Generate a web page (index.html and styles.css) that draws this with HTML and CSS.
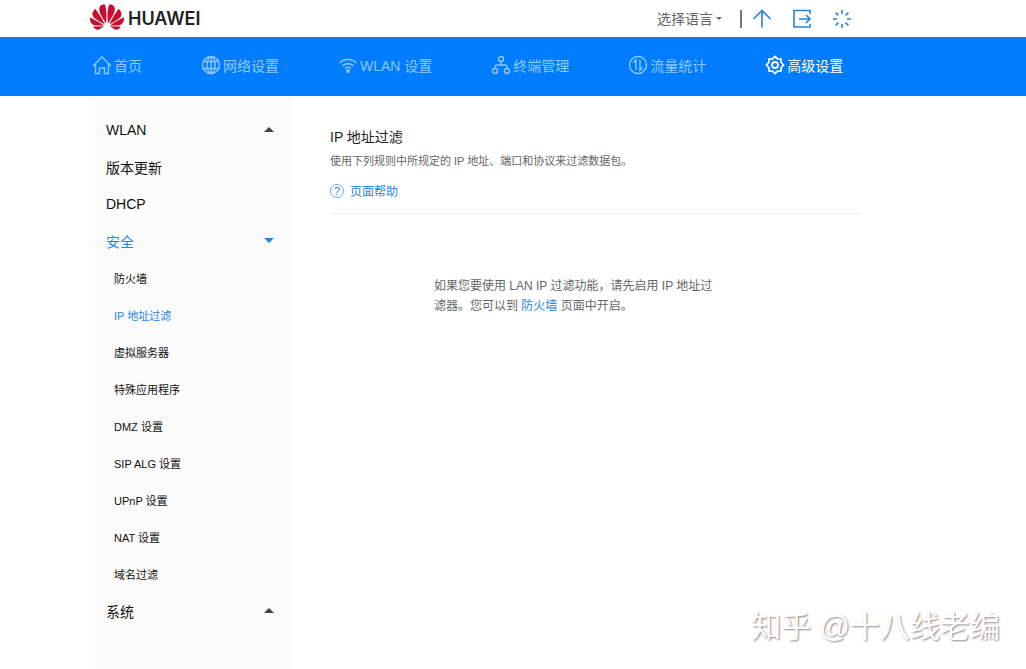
FILE: index.html
```
<!DOCTYPE html>
<html lang="zh-CN">
<head>
<meta charset="UTF-8">
<meta name="viewport" content="width=device-width, initial-scale=1.0">
<title>IP 地址过滤</title>
<link rel="stylesheet" href="styles.css">
</head>
<body>
<header class="topbar">
  <a class="logo" href="#">
    <svg class="logo-mark" viewBox="0 3 24 18" aria-hidden="true"><path d="M3.67 6.14S1.82 7.91 1.72 9.78v.35c.08 1.51 1.22 2.4 1.22 2.4 1.83 1.79 6.26 4.04 7.3 4.55 0 0 .06.03.1-.01l.02-.04v-.04C7.52 10.8 3.67 6.14 3.67 6.14zM9.65 18.6c-.02-.08-.1-.08-.1-.08l-7.38.26c.8 1.43 2.15 2.53 3.56 2.2.96-.25 3.16-1.78 3.88-2.3.06-.05.04-.09.04-.09zm.08-.78C6.49 15.63.21 12.28.21 12.28c-.15.46-.2.9-.21 1.3v.07c0 1.07.4 1.82.4 1.82.8 1.69 2.34 2.2 2.34 2.2.7.3 1.4.31 1.4.31.12.02 4.4 0 5.54 0 .05 0 .08-.05.08-.05v-.06c0-.03-.03-.05-.03-.05zM9.06 3.19a3.42 3.42 0 0 0-2.57 3.15v.41c.03.6.16 1.05.16 1.05.66 2.9 3.86 7.65 4.55 8.65.05.05.1.03.1.03a.1.1 0 0 0 .06-.1c1.06-10.6-1.11-13.42-1.11-13.42-.32.02-1.19.23-1.19.23zm8.299 2.27s-.49-1.8-2.44-2.28c0 0-.57-.14-1.17-.22 0 0-2.18 2.81-1.12 13.43.01.07.06.08.06.08.07.03.1-.03.1-.03.72-1.03 3.9-5.76 4.55-8.64 0 0 .36-1.4.02-2.34zm-2.92 13.07s-.07 0-.09.05c0 0-.01.07.03.1.7.51 2.85 2 3.88 2.3 0 0 .16.05.43.06h.14c.69-.02 1.9-.37 3-2.26l-7.4-.25zm7.83-8.41c.14-2.06-1.94-3.97-1.94-3.98 0 0-3.85 4.66-6.67 10.8 0 0-.03.08.02.13l.04.01h.06c1.06-.53 5.46-2.77 7.28-4.54 0 0 1.15-.93 1.21-2.42zm1.52 2.14s-6.28 3.37-9.52 5.55c0 0-.05.04-.03.11 0 0 .03.06.07.06 1.16 0 5.56 0 5.67-.02 0 0 .57-.02 1.27-.29 0 0 1.56-.5 2.37-2.27 0 0 .73-1.45.17-3.14z"/></svg>
    <span>HUAWEI</span>
  </a>
  <div class="tools">
    <div class="language">
      <select aria-label="选择语言">
        <option>选择语言</option>
      </select>
      <span class="caret"></span>
    </div>
    <span class="divider"></span>
    <button type="button" aria-label="更新">
      <svg viewBox="0 0 20 20"><path d="M10 18.500V2M1.500 10 10 1.500 18.500 10"/></svg>
    </button>
    <button type="button" aria-label="退出">
      <svg viewBox="0 0 20 20"><path d="M18 5V1.500H2v16.500h16V15M7 10h11M14 6l4 4-4 4"/></svg>
    </button>
    <button type="button" aria-label="状态">
      <svg viewBox="0 0 20 20"><path d="M10 1v4M10 15v4M1 10h4M15 10h4M3.600 3.600l2.800 2.800M13.600 13.600l2.800 2.800M3.600 16.400l2.800-2.800M13.600 6.400l2.800-2.800"/></svg>
    </button>
  </div>
</header>

<nav class="mainnav">
  <a href="#"><svg viewBox="0 0 20 20"><path d="M1 11 10 2l9 9M3.500 9v9.500h4V13h5v5.500h4V9"/></svg>首页</a>
  <a href="#"><svg viewBox="0 0 20 20"><circle cx="10" cy="10" r="8.500"/><ellipse cx="10" cy="10" rx="4" ry="8.500"/><path d="M10 1.500v17M2.500 6.500h15M2.500 13.500h15"/></svg>网络设置</a>
  <a href="#"><svg viewBox="0 0 20 20"><path d="M1.500 8c4.700-4.700 12.300-4.700 17 0M4.500 11c3-3 8-3 11 0M7 13.500c1.700-1.700 4.300-1.700 6 0"/><circle class="dot" cx="10" cy="16" r="1.200"/></svg>WLAN 设置</a>
  <a href="#"><svg viewBox="0 0 20 20"><circle cx="10" cy="4" r="2.500"/><circle cx="4" cy="16" r="2.500"/><circle cx="16" cy="16" r="2.500"/><path d="M10 6.500V10M4 13.500V12q0-2 2-2h8q2 0 2 2v1.500"/></svg>终端管理</a>
  <a href="#"><svg viewBox="0 0 20 20"><circle cx="10" cy="10" r="8.500"/><path d="M8 15V5L5.500 7.500M12 5v10l2.500-2.500"/></svg>流量统计</a>
  <a class="active" href="#"><svg viewBox="0 0 20 20"><path d="M10 1.500 12.500 3.800 16 4 16.200 7.500 18.500 10 16.200 12.500 16 16 12.500 16.200 10 18.500 7.500 16.200 4 16 3.800 12.500 1.500 10 3.800 7.500 4 4 7.500 3.800Z"/><circle cx="10" cy="10" r="3"/></svg>高级设置</a>
</nav>

<div class="page">
  <aside class="sidebar">
    <button type="button">WLAN<span class="caret up"></span></button>
    <a href="#">版本更新</a>
    <a href="#">DHCP</a>
    <button class="active" type="button" aria-expanded="true">安全<span class="caret"></span></button>
    <ul class="submenu">
      <li><a href="#">防火墙</a></li>
      <li><a class="active" href="#">IP 地址过滤</a></li>
      <li><a href="#">虚拟服务器</a></li>
      <li><a href="#">特殊应用程序</a></li>
      <li><a href="#">DMZ 设置</a></li>
      <li><a href="#">SIP ALG 设置</a></li>
      <li><a href="#">UPnP 设置</a></li>
      <li><a href="#">NAT 设置</a></li>
      <li><a href="#">域名过滤</a></li>
    </ul>
    <button type="button">系统<span class="caret up"></span></button>
  </aside>

  <main class="content">
    <h1>IP 地址过滤</h1>
    <p class="description">使用下列规则中所规定的 IP 地址、端口和协议来过滤数据包。</p>
    <a class="help" href="#"><span class="help-icon">?</span>页面帮助</a>
    <p class="notice">如果您要使用 LAN IP 过滤功能，请先启用 IP 地址过滤器。您可以到 <a href="#">防火墙</a> 页面中开启。</p>
  </main>
</div>

<div class="watermark">知乎 @十八线老编</div>
</body>
</html>
```
FILE: styles.css
```
* {
  box-sizing: border-box;
}
body {
  margin: 0;
  min-height: 100vh;
  display: flex;
  flex-direction: column;
  background: #fff;
  color: #222;
  font-family: "Liberation Sans", "Noto Sans CJK SC", sans-serif;
  font-size: 14px;
}
a {
  color: inherit;
  text-decoration: none;
}
button, select {
  border: 0;
  padding: 0;
  background: none;
  color: inherit;
  font: inherit;
  cursor: pointer;
}
svg {
  fill: none;
  stroke: currentColor;
}
.caret {
  border: 5px solid transparent;
  border-top-color: currentColor;
  border-bottom: 0;
}
.caret.up {
  border-top: 0;
  border-bottom: 5px solid #444;
}

/* top bar */
.topbar {
  height: 37px;
  padding: 0 174px 0 90px;
  display: flex;
  justify-content: space-between;
  align-items: center;
}
.logo {
  display: flex;
  align-items: center;
  gap: 4px;
  font-family: Inter, sans-serif;
  font-size: 18px;
  font-weight: 600;
}
.logo-mark {
  width: 34px;
  height: 26px;
  margin-bottom: 4px;
  fill: #c8102e;
  stroke: none;
}
.tools {
  display: flex;
  align-items: center;
  gap: 20px;
  color: #2684e8;
}
.tools button {
  width: 20px;
  height: 20px;
}
.tools svg {
  display: block;
  stroke-width: 1.6;
}
.language {
  display: flex;
  align-items: center;
  gap: 3px;
  color: #666;
}
.language select {
  appearance: none;
}
.language .caret {
  border-width: 3px;
  border-bottom: 0;
}
.divider {
  width: 2px;
  height: 18px;
  margin: 0 -10px 0 -2px;
  background: #777;
}

/* main navigation */
.mainnav {
  height: 59px;
  padding: 0 92px 4px;
  display: flex;
  align-items: center;
  gap: 59px;
  background: #007dff;
  color: #8fc8ff;
}
.mainnav a {
  display: flex;
  align-items: center;
  gap: 2px;
  white-space: nowrap;
}
.mainnav svg {
  width: 20px;
  height: 20px;
  stroke-width: 1.4;
}
.mainnav .dot {
  fill: currentColor;
}
.mainnav .active {
  color: #fff;
}
.mainnav .active svg {
  stroke-width: 1.8;
}

.page {
  flex: 1;
  display: flex;
  gap: 38px;
  padding: 0 164px 0 90px;
}

/* side menu */
.sidebar {
  flex: 0 0 202px;
  padding: 15px 18px 20px 16px;
  background: #fbfbfb;
  color: #111;
}
.sidebar > a,
.sidebar > button,
.submenu a {
  display: flex;
  justify-content: space-between;
  align-items: center;
  width: 100%;
  height: 37px;
}
.submenu {
  list-style: none;
  margin: 0;
  padding-left: 8px;
  font-size: 11px;
}
.sidebar .active {
  color: #2684e8;
}

/* content */
.content {
  flex: 1;
}
h1 {
  margin: 30px 0 4px;
  font-size: 14px;
  font-weight: normal;
  line-height: 22px;
}
.description {
  margin: 0;
  color: #666;
  font-size: 11px;
  line-height: 18px;
}
.help {
  display: flex;
  align-items: center;
  gap: 6px;
  height: 44px;
  padding-bottom: 2px;
  border-bottom: 1px solid #eee;
  color: #2684e8;
  font-size: 12px;
}
.help-icon {
  width: 14px;
  height: 14px;
  border: 1px solid #62a7ef;
  border-radius: 50%;
  font-size: 11px;
  line-height: 12px;
  text-align: center;
}
.notice {
  width: 286px;
  margin: 62px auto 0 104px;
  color: #666;
  font-size: 12px;
  line-height: 20px;
}
.notice a {
  color: #2684e8;
}

.watermark {
  position: absolute;
  right: 26px;
  bottom: 20px;
  color: #fff;
  font-size: 30px;
  line-height: 44px;
  text-shadow: 1px 1px 2px #888;
}
```
